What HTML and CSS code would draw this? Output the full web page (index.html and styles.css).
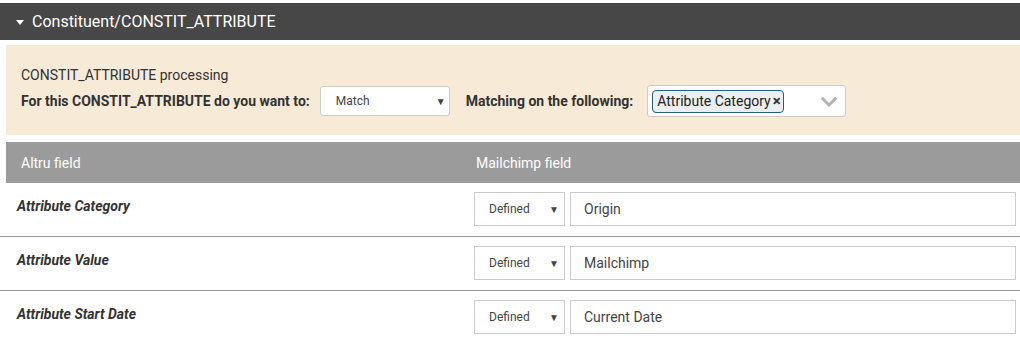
FILE: index.html
```html
<!DOCTYPE html>
<html>
<head>
<meta charset="utf-8">
<link rel="stylesheet" href="styles.css">
</head>
<body>
<div class="panel">
  <div class="panel-head">
    <span class="caret"></span>
    <span class="panel-title">Constituent/CONSTIT_ATTRIBUTE</span>
  </div>
  <div class="process">
    <div class="process-title">CONSTIT_ATTRIBUTE processing</div>
    <div class="process-row">
      <span class="lbl">For this CONSTIT_ATTRIBUTE do you want to:</span>
      <div class="select match"><span>Match</span><span class="arrow">&#9660;</span></div>
      <span class="lbl">Matching on the following:</span>
      <div class="multi">
        <span class="tag">Attribute Category<span class="x">&#215;</span></span>
        <svg class="chev" width="18" height="11" viewBox="0 0 18 11"><path d="M1.8 1.8 L9 9 L16.2 1.8" fill="none" stroke="#b3b3b3" stroke-width="3"/></svg>
      </div>
    </div>
  </div>
  <div class="thead">
    <div class="c1">Altru field</div>
    <div class="c2">Mailchimp field</div>
  </div>
  <div class="row">
    <div class="c1 name">Attribute Category</div>
    <div class="c2 fields">
      <div class="select def"><span>Defined</span><span class="arrow">&#9660;</span></div>
      <div class="input">Origin</div>
    </div>
  </div>
  <div class="row">
    <div class="c1 name">Attribute Value</div>
    <div class="c2 fields">
      <div class="select def"><span>Defined</span><span class="arrow">&#9660;</span></div>
      <div class="input">Mailchimp</div>
    </div>
  </div>
  <div class="row last">
    <div class="c1 name">Attribute Start Date</div>
    <div class="c2 fields">
      <div class="select def"><span>Defined</span><span class="arrow">&#9660;</span></div>
      <div class="input">Current Date</div>
    </div>
  </div>
</div>
</body>
</html>
```
FILE: styles.css
```css
html, body { margin: 0; padding: 0; background: #fff; }
body { font-family: Roboto, "Noto Sans", sans-serif; font-size: 14px; color: #333; }
.panel { padding-top: 3px; width: 1020px; }
.panel-head {
  background: #474747; height: 37px; display: flex; align-items: center;
  padding-left: 16px; color: #fff;
}
.caret {
  width: 0; height: 0; border-left: 4.5px solid transparent; border-right: 4.5px solid transparent;
  border-top: 5px solid #fff; margin-right: 8px; margin-top: 1px;
}
.panel-title { font-size: 16px; }
.process {
  background: #f7ead6; margin: 5px 0 0 6px; height: 90px; box-sizing: border-box;
  padding: 22px 0 0 15px;
}
.process-title { line-height: 17px; }
.process-row { display: flex; align-items: center; margin-top: 1px; }
.lbl { font-weight: bold; }
.select {
  background: #fff; border: 1px solid #ccc; border-radius: 3px; box-sizing: border-box;
  display: flex; align-items: center; justify-content: space-between; color: #444;
}
.select .arrow { font-size: 10px; color: #444; }
.match { width: 130px; height: 30px; margin: 0 16px 0 10px; padding: 0 3px 0 15px; font-size: 12px; }
.multi {
  margin-left: 14px; width: 199px; height: 32px; box-sizing: border-box; background: #fff;
  border: 1px solid #ccc; border-radius: 3px; display: flex; align-items: center;
  padding: 0 7px 0 4px; justify-content: space-between;
}
.tag {
  border: 1px solid #2c5b79; border-radius: 4px; background: #eaeff3; height: 23px; box-sizing: border-box;
  display: flex; align-items: center; padding: 0 2px 0 4px; font-size: 14px; color: #222;
}
.tag .x { font-weight: bold; font-size: 15px; margin-left: 2px; color: #333; }
.chev { margin-right: 0; }
.thead {
  background: #9b9b9b; color: #fff; height: 41px; margin: 7px 0 0 6px; display: flex; align-items: center;
}
.thead .c1 { width: 456px; padding-left: 15px; box-sizing: border-box; }
.thead .c2 { padding-left: 14px; }
.row {
  display: flex; height: 54px; border-bottom: 1px solid #999; box-sizing: border-box;
}
.row.last { border-bottom: none; }
.row .c1 { width: 462px; padding: 15px 0 0 17px; box-sizing: border-box; }
.name { font-weight: bold; font-style: italic; }
.fields { display: flex; padding-top: 9px; padding-left: 12px; }
.def { width: 91px; height: 34px; padding: 0 5px 0 14px; font-size: 12px; border-radius: 0; }
.input {
  width: 446px; height: 34px; box-sizing: border-box; border: 1px solid #ccc; margin-left: 5px;
  padding-left: 13px; display: flex; align-items: center; font-size: 14px; color: #444;
}
```
